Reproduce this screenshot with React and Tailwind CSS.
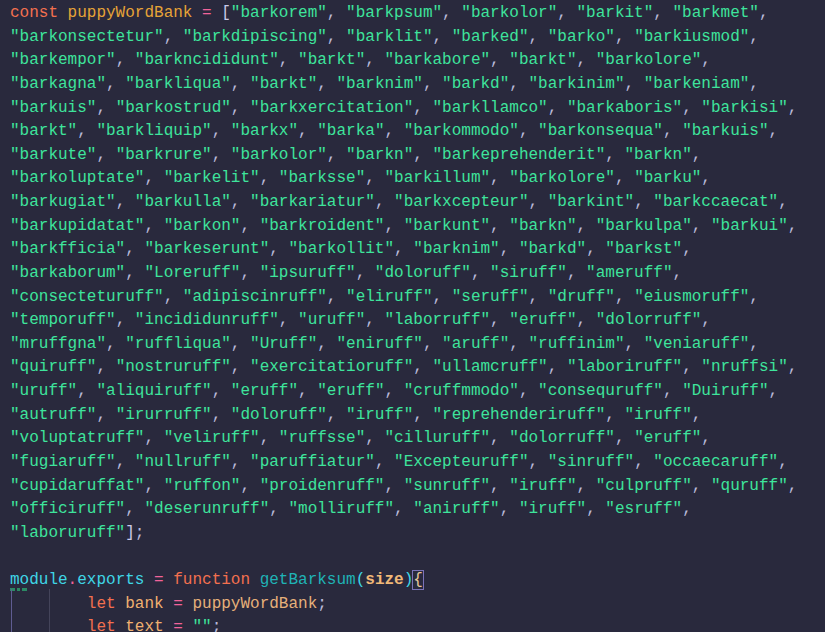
const WORDS = [
  ['"barkorem", "barkpsum", "barkolor", "barkit", "barkmet",'],
  ['"barkonsectetur", "barkdipiscing", "barklit", "barked", "barko", "barkiusmod",'],
  ['"barkempor", "barkncididunt", "barkt", "barkabore", "barkt", "barkolore",'],
  ['"barkagna", "barkliqua", "barkt", "barknim", "barkd", "barkinim", "barkeniam",'],
  ['"barkuis", "barkostrud", "barkxercitation", "barkllamco", "barkaboris", "barkisi",'],
  ['"barkt", "barkliquip", "barkx", "barka", "barkommodo", "barkonsequa", "barkuis",'],
  ['"barkute", "barkrure", "barkolor", "barkn", "barkeprehenderit", "barkn",'],
  ['"barkoluptate", "barkelit", "barksse", "barkillum", "barkolore", "barku",'],
  ['"barkugiat", "barkulla", "barkariatur", "barkxcepteur", "barkint", "barkccaecat",'],
  ['"barkupidatat", "barkon", "barkroident", "barkunt", "barkn", "barkulpa", "barkui",'],
  ['"barkfficia", "barkeserunt", "barkollit", "barknim", "barkd", "barkst",'],
  ['"barkaborum", "Loreruff", "ipsuruff", "doloruff", "siruff", "ameruff",'],
  ['"consecteturuff", "adipiscinruff", "eliruff", "seruff", "druff", "eiusmoruff",'],
  ['"temporuff", "incididunruff", "uruff", "laborruff", "eruff", "dolorruff",'],
  ['"mruffgna", "ruffliqua", "Uruff", "eniruff", "aruff", "ruffinim", "veniaruff",'],
  ['"quiruff", "nostruruff", "exercitatioruff", "ullamcruff", "laboriruff", "nruffsi",'],
  ['"uruff", "aliquiruff", "eruff", "eruff", "cruffmmodo", "consequruff", "Duiruff",'],
  ['"autruff", "irurruff", "doloruff", "iruff", "reprehenderiruff", "iruff",'],
  ['"voluptatruff", "veliruff", "ruffsse", "cilluruff", "dolorruff", "eruff",'],
  ['"fugiaruff", "nullruff", "paruffiatur", "Excepteuruff", "sinruff", "occaecaruff",'],
  ['"cupidaruffat", "ruffon", "proidenruff", "sunruff", "iruff", "culpruff", "quruff",'],
  ['"officiruff", "deserunruff", "molliruff", "aniruff", "iruff", "esruff",'],
];

// split a list line into string tokens and punctuation
function ListLine({ text }) {
  const parts = text.split(/("[^"]*")/).filter(Boolean);
  return parts.map((p, i) =>
    p.startsWith('"') ? (
      <span key={i} className="text-[#3ee49c]">{p}</span>
    ) : (
      <span key={i} className="text-[#b9b9d9]">{p}</span>
    )
  );
}

const Line = ({ children }) => <div className="h-[23.64px] whitespace-pre">{children}</div>;

export default function App() {
  return (
    <div
      className="relative w-[825px] h-[632px] overflow-hidden bg-[#29293d] pl-[10px] pt-[2px] text-[16px] leading-[23.64px]"
      style={{ fontFamily: '"Liberation Mono", "DejaVu Sans Mono", monospace' }}
    >
      <Line>
        <span className="text-[#f3704f]">const </span>
        <span className="text-[#e6a337]">puppyWordBank </span>
        <span className="text-[#f2639a]">= </span>
        <span className="text-[#c9c9e9]">[</span>
        <ListLine text={WORDS[0][0]} />
      </Line>
      {WORDS.slice(1).map((w, i) => (
        <Line key={i}>
          <ListLine text={w[0]} />
        </Line>
      ))}
      <Line>
        <span className="text-[#3ee49c]">"laboruruff"</span>
        <span className="text-[#c9c9e9]">]</span>
        <span className="text-[#b9b9d9]">;</span>
      </Line>
      <Line> </Line>
      <Line>
        <span className="relative text-[#3fd6e6]">
          module
          <span className="absolute left-0 bottom-[-2px] flex gap-[2px]">
            <span className="w-[5px] h-[3px] bg-[#2b8a64]" />
            <span className="w-[3px] h-[3px] bg-[#2b8a64]" />
            <span className="w-[5px] h-[3px] bg-[#2b8a64]" />
          </span>
        </span>
        <span className="text-[#f2639a]">.</span>
        <span className="text-[#3fd6e6]">exports </span>
        <span className="text-[#f2639a]">= </span>
        <span className="text-[#f3704f]">function </span>
        <span className="text-[#1fb3b6]">getBarksum</span>
        <span className="text-[#3fd6e6]">(</span>
        <span className="font-bold text-[#f0b878]">size</span>
        <span className="text-[#3fd6e6]">)</span>
        <span className="outline outline-1 outline-[#7a72b8] text-[#e8c89a]">{'{'}</span>
      </Line>
      <div className="relative">
        <div className="absolute left-[1px] top-[-4px] bottom-[-40px] w-px bg-[#5f5c92]" />
        <div className="absolute left-[39px] top-[-4px] bottom-[-40px] w-px bg-[#44445a]" />
        <Line>
          {'        '}
          <span className="text-[#f3704f]">let </span>
          <span className="text-[#f0b070]">bank </span>
          <span className="text-[#f2639a]">= </span>
          <span className="text-[#e6b07a]">puppyWordBank</span>
          <span className="text-[#b9b9d9]">;</span>
        </Line>
        <Line>
          {'        '}
          <span className="text-[#f3704f]">let </span>
          <span className="text-[#f0b070]">text </span>
          <span className="text-[#f2639a]">= </span>
          <span className="text-[#3ee49c]">""</span>
          <span className="text-[#b9b9d9]">;</span>
        </Line>
      </div>
    </div>
  );
}
